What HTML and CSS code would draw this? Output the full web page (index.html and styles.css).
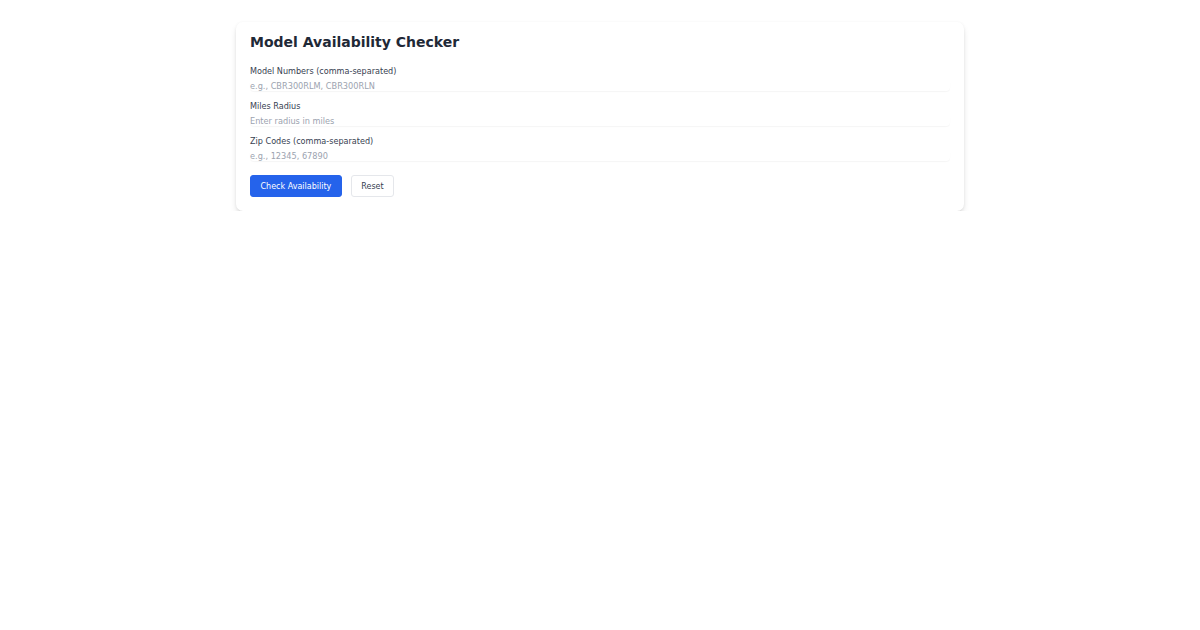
FILE: index.html
```html
<!DOCTYPE html>
<html lang="en">
<head>
<meta charset="utf-8">
<title>Model Availability Checker</title>
<link rel="stylesheet" href="styles.css">
</head>
<body>
<div class="card">
  <h1 class="title">Model Availability Checker</h1>
  <div class="fields">
    <div class="field">
      <label class="label" for="models">Model Numbers (comma-separated)</label>
      <input class="input" id="models" type="text" placeholder="e.g., CBR300RLM, CBR300RLN">
    </div>
    <div class="field">
      <label class="label" for="radius">Miles Radius</label>
      <input class="input" id="radius" type="text" placeholder="Enter radius in miles">
    </div>
    <div class="field">
      <label class="label" for="zips">Zip Codes (comma-separated)</label>
      <input class="input" id="zips" type="text" placeholder="e.g., 12345, 67890">
    </div>
  </div>
  <div class="actions">
    <button class="btn btn-primary" type="button">Check Availability</button>
    <button class="btn btn-secondary" type="button">Reset</button>
  </div>
</div>
</body>
</html>
```
FILE: styles.css
```css
html, body {
  margin: 0;
  padding: 0;
  background: #ffffff;
  font-family: "DejaVu Sans", sans-serif;
}
.card {
  width: 728px;
  box-sizing: border-box;
  margin: 22px auto 0;
  padding: 12px 14px 14px;
  background: #ffffff;
  border-radius: 7px;
  box-shadow: 0 4px 7px -1px rgba(0, 0, 0, 0.12), 0 2px 4px -2px rgba(0, 0, 0, 0.12), 0 0 3px rgba(0, 0, 0, 0.04);
}
.title {
  margin: 0 0 16px;
  font-size: 14px;
  line-height: 16px;
  font-weight: bold;
  color: #1f2937;
}
.fields {
  display: flex;
  flex-direction: column;
  gap: 10px;
}
.field {
  display: flex;
  flex-direction: column;
  gap: 1px;
}
.label {
  font-size: 8.1px;
  line-height: 11px;
  color: #374151;
}
.input {
  box-sizing: border-box;
  width: 700px;
  height: 13px;
  margin: 0;
  padding: 2px 0 0;
  border: none;
  border-radius: 4px;
  background: #ffffff;
  box-shadow: 0 1px 1px rgba(0, 0, 0, 0.04);
  font-family: "DejaVu Sans", sans-serif;
  font-size: 8.2px;
  color: #374151;
  outline: none;
}
.input::placeholder {
  color: #9ca3af;
}
.actions {
  display: flex;
  gap: 9px;
  margin-top: 14px;
}
.btn {
  height: 22px;
  padding: 0 9.5px;
  border-radius: 3px;
  font-family: "DejaVu Sans", sans-serif;
  font-size: 8px;
  cursor: pointer;
}
.btn-primary {
  background: #2563eb;
  color: #ffffff;
  border: 1px solid #2563eb;
}
.btn-secondary {
  background: #ffffff;
  color: #374151;
  border: 1px solid #e5e7eb;
}
```
